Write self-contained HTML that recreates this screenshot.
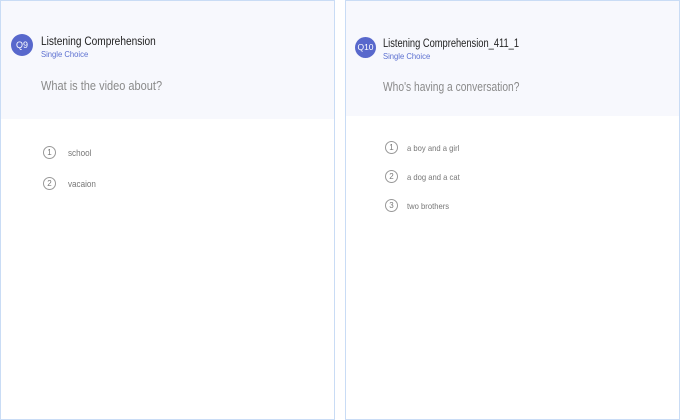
<!DOCTYPE html>
<html><head><style>
body{margin:0;width:680px;height:420px;background:#fff;font-family:"Liberation Sans",sans-serif;position:relative;overflow:hidden}
.p{position:absolute;top:0;height:418px;border:1px solid #c9dcf5;background:#fff}
.h{position:absolute;left:0;right:0;top:0;background:#f7f8fd}
.b{position:absolute;border-radius:50%;background:#5868cc;color:#fff;font-size:9px;text-align:center}
.t,.s,.q,.o{position:absolute;white-space:nowrap;transform-origin:0 50%}
.t{font-size:11.5px;color:#222}
.s{font-size:8.5px;color:#5b6fd0;transform:scaleX(.9)}
.q{font-size:12.5px;color:#8a8a8a}
.c{position:absolute;width:11px;height:11px;border:1px solid #999;border-radius:50%;font-size:8px;color:#777;text-align:center;line-height:11px}
.o{font-size:9px;color:#777;transform:scaleX(.9)}
</style></head><body>
<div class="p" style="left:0;width:333px">
 <div class="h" style="height:118px"></div>
 <div class="b" style="left:10px;top:33px;width:22px;height:22px;line-height:22px">Q9</div>
 <div class="t" style="left:40px;top:35px;transform:scaleX(.88)">Listening Comprehension</div>
 <div class="s" style="left:40px;top:48px">Single Choice</div>
 <div class="q" style="left:40px;top:78px;transform:scaleX(.88)">What is the video about?</div>
 <div class="c" style="left:42px;top:145px">1</div><div class="o" style="left:67px;top:147px">school</div>
 <div class="c" style="left:42px;top:176px">2</div><div class="o" style="left:67px;top:178px">vacaion</div>
</div>
<div class="p" style="left:345px;width:333px">
 <div class="h" style="height:115px"></div>
 <div class="b" style="left:9px;top:36px;width:21px;height:21px;line-height:21px;font-size:8.5px">Q10</div>
 <div class="t" style="left:37px;top:37px;transform:scaleX(.81)">Listening Comprehension_411_1</div>
 <div class="s" style="left:37px;top:50px">Single Choice</div>
 <div class="q" style="left:37px;top:79px;transform:scaleX(.82)">Who's having a conversation?</div>
 <div class="c" style="left:39px;top:140px">1</div><div class="o" style="left:61px;top:142px;font-size:8.5px">a boy and a girl</div>
 <div class="c" style="left:39px;top:169px">2</div><div class="o" style="left:61px;top:171px;font-size:8.5px">a dog and a cat</div>
 <div class="c" style="left:39px;top:198px">3</div><div class="o" style="left:61px;top:200px;font-size:8.5px">two brothers</div>
</div>
</body></html>
